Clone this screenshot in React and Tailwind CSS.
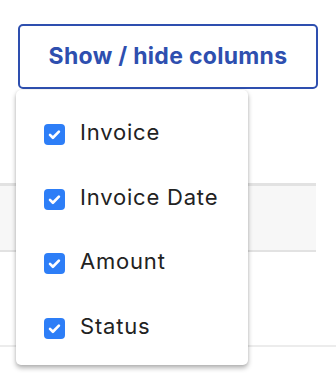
import React from "react";

const items = ["Invoice", "Invoice Date", "Amount", "Status"];

function Check() {
  return (
    <span className="flex h-[21px] w-[21px] shrink-0 items-center justify-center rounded-[4px] bg-[#2d7ef7]">
      <svg width="15" height="15" viewBox="0 0 16 16" fill="none">
        <path d="M3.2 8.4l3.1 3.1 6.4-6.6" stroke="#fff" strokeWidth="2.8" strokeLinecap="round" strokeLinejoin="round" />
      </svg>
    </span>
  );
}

export default function App() {
  return (
    <div className="relative h-[390px] w-[336px] overflow-hidden bg-white" style={{ fontFamily: "Inter, 'Noto Sans', sans-serif" }}>
      <button className="ml-[18px] mt-[24px] flex h-[65px] w-[300px] items-center justify-center rounded-[5px] border-2 border-[#2e4faf] bg-white text-[23px] font-bold tracking-[0.3px] text-[#2e4faf]">
        Show / hide columns
      </button>
      <div className="mt-[94px] h-[69px] w-[316px] border-t-[3px] border-b-2 border-[#e2e2e2] bg-[#f7f7f7]" />
      <div className="mt-[93px] h-[2px] w-[336px] bg-[#ececec]" />
      <div className="absolute left-[16px] top-[90px] w-[232px] rounded-[5px] bg-white pb-[4px] pl-[28px] pt-[12px] shadow-[0_3px_5px_rgba(0,0,0,0.3),0_0_3px_rgba(0,0,0,0.08)]">
        {items.map((t) => (
          <label key={t} className="flex h-[64.7px] items-center gap-[15px]">
            <Check />
            <span className="-mt-[5px] text-[22px] leading-none tracking-[0.8px] text-[#222]">{t}</span>
          </label>
        ))}
      </div>
    </div>
  );
}
